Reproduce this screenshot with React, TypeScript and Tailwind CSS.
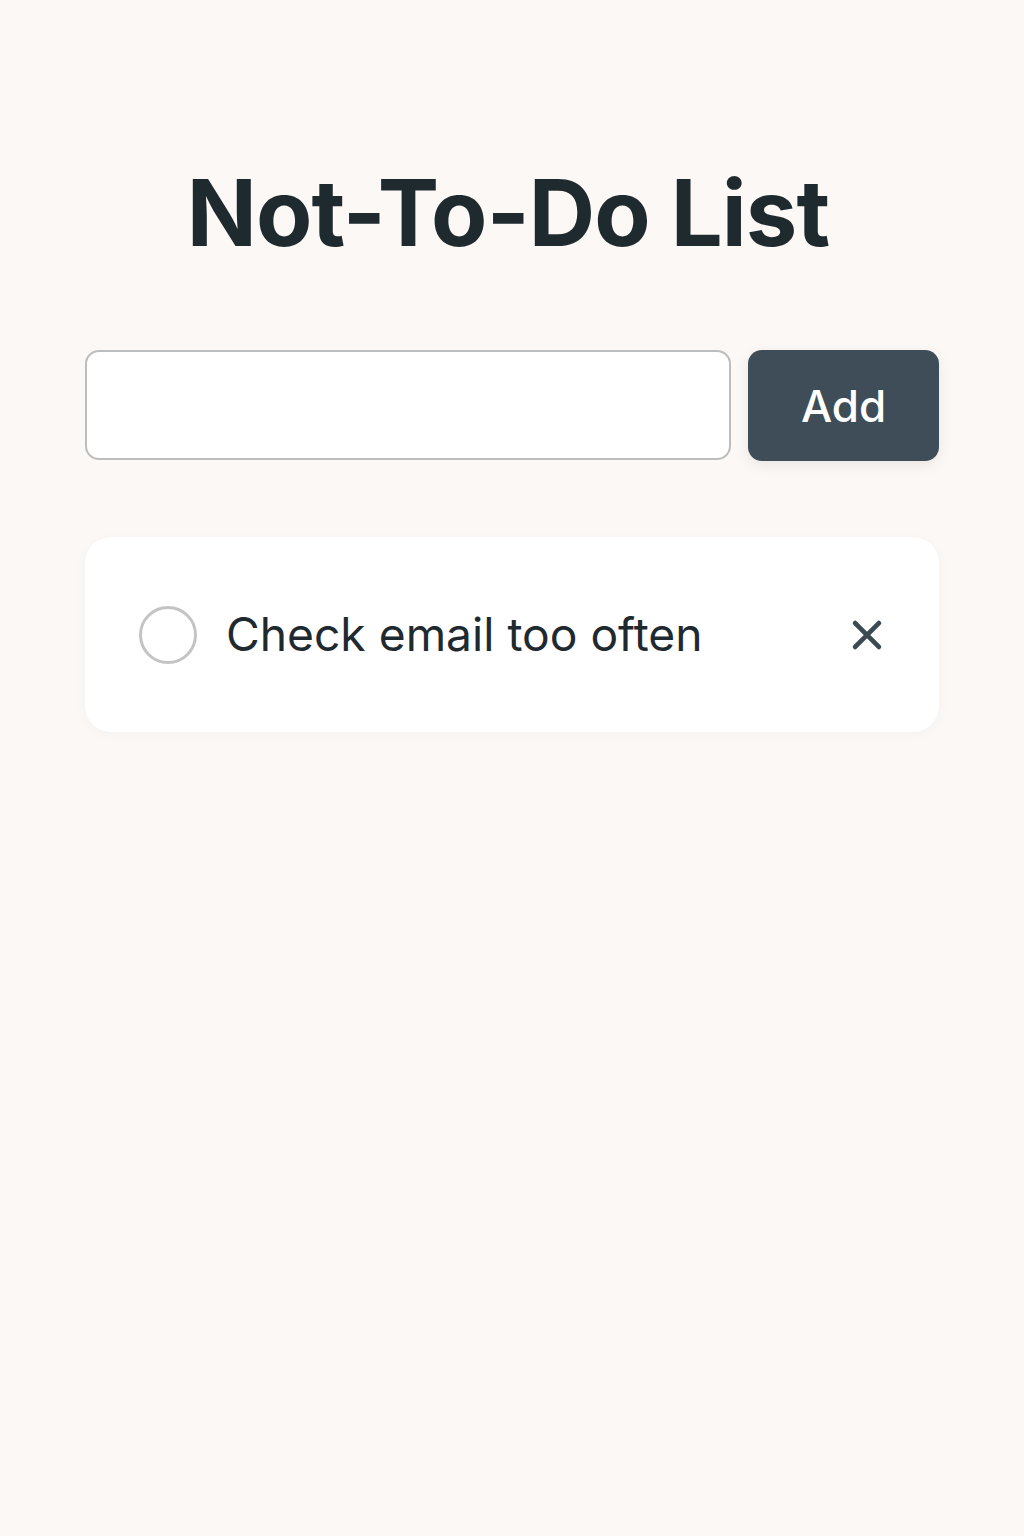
import React from "react";

export default function App() {
  return (
    <div className="min-h-[1536px] w-full bg-[#fbf8f5] font-['Inter',sans-serif] text-[#1f2a30]">
      <div className="mx-auto flex w-[854px] flex-col pt-[158px]">
        <h1 className="pr-[8px] text-center text-[92px] font-bold leading-[110px] tracking-[-0.9px] text-[#1f2a2f]">
          Not-To-Do List
        </h1>
        <div className="mt-[82px] flex gap-[17px]">
          <input
            type="text"
            className="h-[110px] min-w-0 flex-1 rounded-[14px] border-2 border-[#bdbdbd] bg-white px-6 text-[40px] outline-none"
          />
          <button className="h-[111px] w-[191px] shrink-0 rounded-[14px] bg-[#3e4d57] text-[44px] font-medium text-white shadow-[0_4px_14px_rgba(0,0,0,0.08)]">
            Add
          </button>
        </div>
        <div className="mt-[76px] flex h-[195px] items-center rounded-[26px] bg-white pl-[54px] pr-[52px] shadow-[0_2px_12px_rgba(0,0,0,0.03)]">
          <div className="h-[58px] w-[58px] shrink-0 rounded-full border-[3px] border-[#c4c4c4]" />
          <span className="ml-[29px] flex-1 text-[46.2px] leading-none text-[#1f2a30]">
            Check email too often
          </span>
          <svg width="38" height="38" viewBox="0 0 24 24" className="mr-[1px]" fill="none" stroke="#3b4952" strokeWidth="3" strokeLinecap="round">
            <path d="M4.5 4.5L19.5 19.5M19.5 4.5L4.5 19.5" />
          </svg>
        </div>
      </div>
    </div>
  );
}
